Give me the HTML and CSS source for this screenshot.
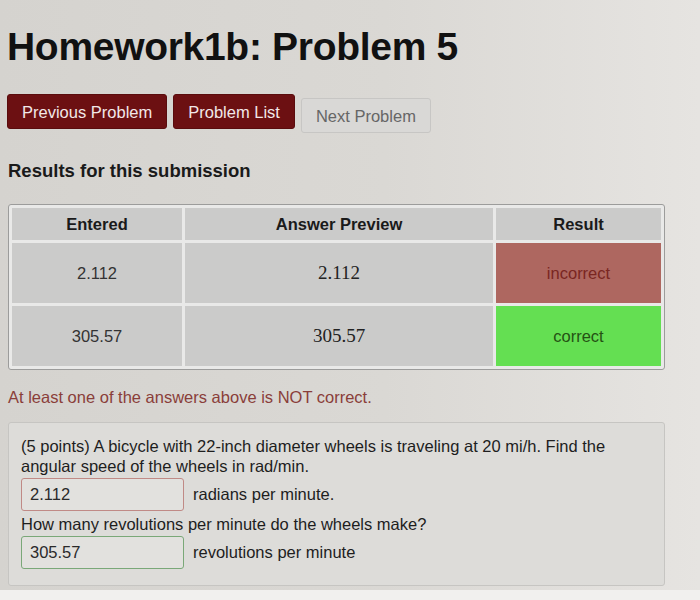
FILE: index.html
```html
<!DOCTYPE html>
<html>
<head>
<meta charset="utf-8">
<link rel="stylesheet" href="styles.css">
</head>
<body>
<div class="page">
  <h1 class="title">Homework1b: Problem 5</h1>
  <div class="nav">
    <span class="btn btn-dark">Previous Problem</span>
    <span class="btn btn-dark">Problem List</span>
    <span class="btn btn-light">Next Problem</span>
  </div>
  <h2 class="subtitle">Results for this submission</h2>
  <table class="results">
    <tr class="head">
      <th class="c1">Entered</th>
      <th class="c2">Answer Preview</th>
      <th class="c3">Result</th>
    </tr>
    <tr class="row">
      <td>2.112</td>
      <td class="math">2.112</td>
      <td class="bad">incorrect</td>
    </tr>
    <tr class="row">
      <td>305.57</td>
      <td class="math">305.57</td>
      <td class="good">correct</td>
    </tr>
  </table>
  <p class="msg">At least one of the answers above is NOT correct.</p>
  <div class="problem">
    <p class="q">(5 points) A bicycle with 22-inch diameter wheels is traveling at 20 mi/h. Find the angular speed of the wheels in rad/min.</p>
    <div class="ans"><span class="input input-bad">2.112</span><span class="unit">radians per minute.</span></div>
    <p class="q">How many revolutions per minute do the wheels make?</p>
    <div class="ans"><span class="input input-good">305.57</span><span class="unit">revolutions per minute</span></div>
  </div>
</div>
<div class="edge"></div>
</body>
</html>
```
FILE: styles.css
```css
html, body {
  margin: 0;
  padding: 0;
  height: 100%;
}
body {
  font-family: "Liberation Sans", Arial, sans-serif;
  color: #1a1a1a;
  background: linear-gradient(90deg, #d5d3cf 0%, #dad8d4 55%, #e6e4e1 100%);
  position: relative;
  overflow: hidden;
}
.page {
  padding: 25px 35px 0 7px;
  height: 565px;
}
.title {
  margin: 0;
  font-size: 39px;
  line-height: 44px;
  font-weight: bold;
  color: #111;
  letter-spacing: -0.3px;
}
.nav {
  display: flex;
  gap: 6px;
  margin-top: 25px;
}
.btn {
  display: inline-block;
  height: 35px;
  line-height: 35px;
  padding: 0 14px;
  font-size: 16.5px;
  border-radius: 3px;
  box-sizing: border-box;
}
.btn-dark {
  background: #6c1012;
  color: #f2e8e8;
  border: 1px solid #5a0c0d;
}
.btn-light {
  background: #d9d8d6;
  color: #666;
  border: 1px solid #c7c6c4;
  margin-top: 4px;
}
.subtitle {
  margin: 27px 0 0 1px;
  font-size: 18.5px;
  line-height: 22px;
  font-weight: bold;
  color: #1a1a1a;
}
.results {
  margin-top: 22px;
  margin-left: 1px;
  width: 657px;
  border-collapse: separate;
  border-spacing: 3px;
  background: #e9e9e8;
  border: 1px solid #9c9c9b;
  border-radius: 3px;
}
.results th, .results td {
  background: #cbcbca;
  text-align: center;
  padding: 0;
}
.head th {
  height: 32px;
  font-size: 16.5px;
  font-weight: bold;
  color: #1a1a1a;
}
.c1 { width: 170px; }
.c2 { width: 308px; }
.row td {
  height: 60px;
  font-size: 16.5px;
  color: #333;
}
.row td.math {
  font-family: "Liberation Serif", "Times New Roman", serif;
  font-size: 19px;
  color: #222;
}
.row td.bad {
  background: #ae6760;
  color: #7a2622;
}
.row td.good {
  background: #64df52;
  color: #245214;
}
.msg {
  margin: 17px 0 0 1px;
  font-size: 16.5px;
  line-height: 20px;
  color: #8a3e3a;
}
.problem {
  margin-top: 15px;
  margin-left: 1px;
  width: 657px;
  box-sizing: border-box;
  height: 164px;
  background: #dddcd9;
  border: 1px solid #c6c5c2;
  border-radius: 3px;
  padding: 13px 50px 0 12px;
}
.q {
  margin: 0;
  font-size: 16.5px;
  line-height: 20px;
  color: #1e1e1e;
}
.ans {
  display: flex;
  align-items: center;
  gap: 9px;
  margin: 2px 0 3px 0;
}
.input {
  display: inline-block;
  width: 163px;
  height: 33px;
  line-height: 31px;
  box-sizing: border-box;
  padding: 0 8px;
  background: #e2e1de;
  border-radius: 3px;
  font-size: 16.5px;
  color: #2a2a2a;
}
.input-bad { border: 1px solid #c08a86; }
.input-good { border: 1px solid #7aa878; }
.unit {
  font-size: 16.5px;
  color: #1e1e1e;
}
.edge {
  position: absolute;
  left: 0;
  right: 0;
  bottom: 0;
  height: 10px;
  background: #f1f0ee;
}
```
